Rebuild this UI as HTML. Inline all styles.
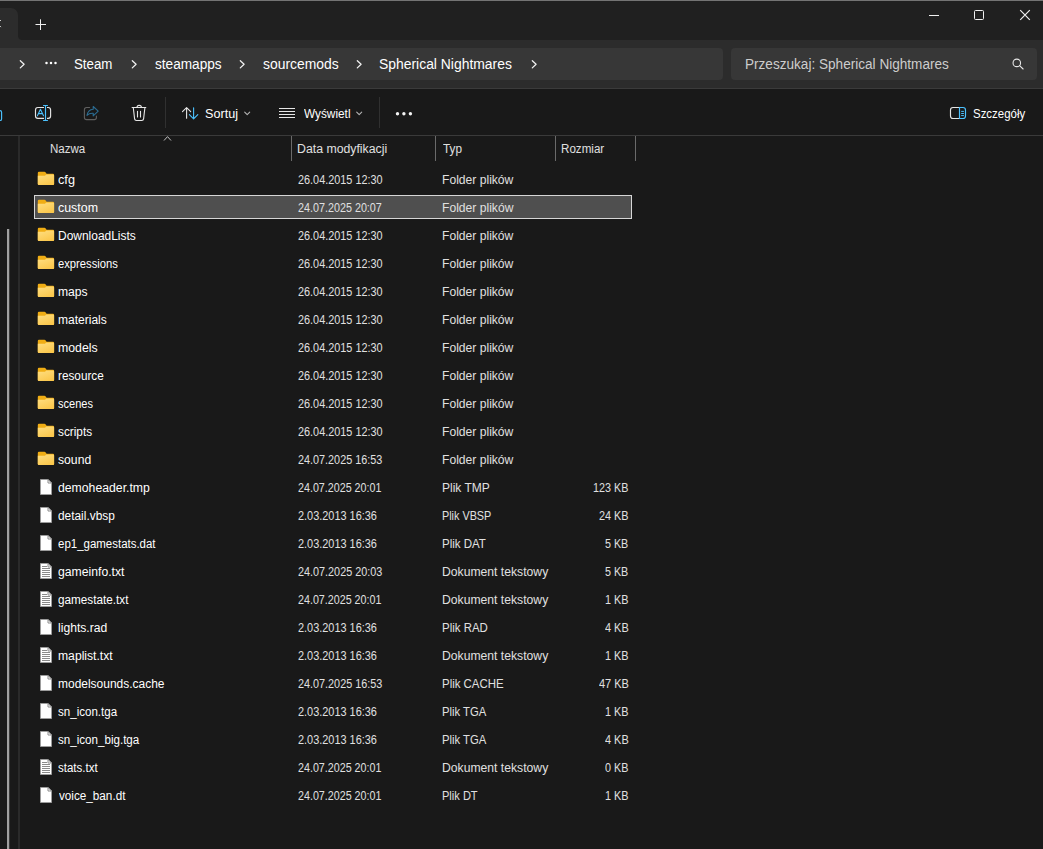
<!DOCTYPE html>
<html lang="pl">
<head>
<meta charset="utf-8">
<title>Spherical Nightmares</title>
<style>
*{margin:0;padding:0;box-sizing:border-box}
html,body{width:1043px;height:849px;overflow:hidden;background:#191919}
body{position:relative;font-family:"Liberation Sans",sans-serif;font-size:12px;color:#fff}
.abs,svg.i{position:absolute}
svg{display:block;overflow:visible}
#title{left:0;top:0;width:1043px;height:40px;background:#202020}
#topline{left:0;top:0;width:1043px;height:1px;background:#747474}
#tab{left:-12px;top:8px;width:30px;height:32px;background:#2c2c2c;border-radius:7px 7px 0 0}
#tabfoot{left:18px;top:36px;width:4px;height:4px;background:radial-gradient(circle at 100% 0,#202020 3.5px,#2c2c2c 4.5px)}
#addr{left:0;top:40px;width:1043px;height:48px;background:#2c2c2c}
#addrline{left:0;top:88px;width:1043px;height:1px;background:#3b3b3b}
#abox{left:-10px;top:48px;width:732.6px;height:32px;background:#373737;border-radius:4px}
#sbox{left:731px;top:48px;width:306px;height:32px;background:#373737;border-radius:4px}
#toolline{left:0;top:135px;width:1043px;height:1px;background:#3a3a3a}
.vsep{top:97px;width:1px;height:31px;background:#303030}
.t{position:absolute;white-space:nowrap;transform-origin:0 50%}
.t.n{height:28px;line-height:28px;color:#fff}
.t.o{height:28px;line-height:28px;color:#e0e0e0}
.t.h{height:26px;line-height:26px;color:#e0e0e0}
.t.c{height:32px;line-height:32px;font-size:14px;color:#fff}
.t.c.s{color:#cdcdcd}
.t.b{height:30px;line-height:30px;color:#fff}
.sep{top:136px;width:1px;height:25px;background:#6a6a6a}
.selbox{position:absolute;left:34px;width:598px;height:24px;background:#4f4f4f;border:1px solid #d6d6d6}
.ic{position:absolute}
.ic.d{left:38px;width:16px;height:14px}
.ic.f{left:40px;width:12px;height:16px}
</style>
</head>
<body>
<svg width="0" height="0" style="position:absolute">
<defs>
<linearGradient id="fg" x1="0" y1="0" x2="0.6" y2="1"><stop offset="0" stop-color="#ffdf82"/><stop offset="1" stop-color="#fbc84e"/></linearGradient>
<g id="fold">
<path d="M-0.2 1 Q-0.2 -0.2 1 -0.2 H6.5 Q7.1 -0.2 7.5 0.3 L8.6 1.8 H15 Q16.1 1.8 16.1 2.9 V11.9 Q16.1 13 15 13 H0.9 Q-0.2 13 -0.2 11.9 Z" fill="#f0ad14"/>
<path d="M-0.2 3.8 H6.3 Q6.9 3.8 7.3 3.4 L8.2 2.5 H15 Q16.1 2.5 16.1 3.6 V11.9 Q16.1 13 15 13 H0.9 Q-0.2 13 -0.2 11.9 Z" fill="url(#fg)"/>
</g>
<g id="file">
<path d="M0.5 0.5 H8 L11.5 4 V15.5 H0.5 Z" fill="#ffffff" stroke="#9c9c9c" stroke-width="1"/>
<path d="M8 0.5 V4 H11.5 Z" fill="#ffffff" stroke="#8c8c8c" stroke-width="1" stroke-linejoin="miter"/>
</g>
<g id="txt">
<path d="M0.5 0.5 H8 L11.5 4 V15.5 H0.5 Z" fill="#ffffff" stroke="#9c9c9c" stroke-width="1"/>
<path d="M8 0.5 V4 H11.5 Z" fill="#ffffff" stroke="#8c8c8c" stroke-width="1" stroke-linejoin="miter"/>
<path d="M2 3.5H7 M2 5.5H10 M2 7.5H10 M2 9.5H10 M2 11.5H10 M2 13.5H10" stroke="#8a8a8a" stroke-width="1"/>
</g>
<path id="chev" d="M0.3 0.3 L4.1 3.9 L0.3 7.5" fill="none" stroke="#f2f2f2" stroke-width="1.25" stroke-linecap="round" stroke-linejoin="round"/>
<path id="chevd" d="M0.4 0.5 L2.9 3 L5.4 0.5" fill="none" stroke="#b4b4b4" stroke-width="1.1" stroke-linecap="round" stroke-linejoin="round"/>
</defs>
</svg>

<div id="title" class="abs"></div>
<div id="topline" class="abs"></div>
<div id="tab" class="abs"></div>
<div id="tabfoot" class="abs"></div>
<div id="addr" class="abs"></div>
<div id="addrline" class="abs"></div>
<div id="abox" class="abs"></div>
<div id="sbox" class="abs"></div>
<div id="toolline" class="abs"></div>

<!-- title bar glyphs -->
<svg class="i" style="left:0;top:0" width="1043" height="40" viewBox="0 0 1043 40">
<g fill="none" stroke="#f0f0f0" stroke-width="1">
<path d="M-6.1 20.1 L0.9 27.1 M-6.1 27.1 L0.9 20.1" stroke="#e0e0e0"/>
<path d="M35.5 24.5 H46 M40.5 19.3 V30"/>
<path d="M929 15.5 H939"/>
<rect x="974.5" y="10.5" width="9" height="9" rx="1"/>
<path d="M1020.2 10.2 L1029.8 19.8 M1029.8 10.2 L1020.2 19.8" stroke-width="1.2"/>
</g>
</svg>

<!-- address bar glyphs -->
<svg class="i" style="left:0;top:40px" width="1043" height="48" viewBox="0 40 1043 48">
<use href="#chev" x="20" y="60.4"/>
<use href="#chev" x="132" y="60.4"/>
<use href="#chev" x="240" y="60.4"/>
<use href="#chev" x="357" y="60.4"/>
<use href="#chev" x="532" y="60.4"/>
<g fill="#ffffff"><circle cx="46.5" cy="63" r="1.25"/><circle cx="51" cy="63" r="1.25"/><circle cx="55.5" cy="63" r="1.25"/></g>
<g fill="none" stroke="#e8e8e8" stroke-width="1.1" stroke-linecap="round"><circle cx="1016.8" cy="62.9" r="3.75"/><path d="M1019.6 65.7 L1023.1 69"/></g>
</svg>

<!-- toolbar glyphs -->
<div class="vsep abs" style="left:165px"></div>
<div class="vsep abs" style="left:379px"></div>
<svg class="i" style="left:0;top:89px" width="1043" height="46" viewBox="0 89 1043 46">
<!-- partial paste icon -->
<path d="M-3 110.6 H0 Q1.6 110.6 1.6 112.2 V118.9 Q1.6 120.5 0 120.5 H-3" fill="none" stroke="#4cc2ff" stroke-width="1.15"/>
<!-- rename -->
<g fill="none" stroke-width="1.15" stroke-linecap="butt">
<path d="M44 107.5 H37.9 Q35.5 107.5 35.5 109.9 V116 Q35.5 118.4 37.9 118.4 H44" stroke="#e4e4e4"/>
<path d="M47 107.5 H48.2 Q50.6 107.5 50.6 109.9 V116 Q50.6 118.4 48.2 118.4 H47" stroke="#e4e4e4"/>
<path d="M45.5 105.5 V120.5 M43.1 105.5 H47.9 M43.1 120.5 H47.9" stroke="#4cc2ff"/>
<path d="M37.4 115.8 L40.45 109.2 L43.5 115.8 M38.6 113.6 H42.3" stroke="#4cc2ff" stroke-width="1.05" stroke-linejoin="round" stroke-linecap="round"/>
</g>
<!-- share (disabled) -->
<g fill="none" stroke-width="1.1" stroke-linecap="round" stroke-linejoin="round">
<path d="M89.6 107.5 H86.6 Q84.4 107.5 84.4 109.7 V117.4 Q84.4 119.6 86.6 119.6 H94.2 Q96.4 119.6 96.4 117.4 V116" stroke="#606060"/>
<path d="M93.2 106.5 L98.2 111.2 L93.2 115.8 V113.3 Q89.2 113 87 115.3 Q87.8 109.7 93.2 109.2 Z" stroke="#2b6c92"/>
</g>
<!-- trash -->
<g fill="none" stroke="#e6e6e6" stroke-width="1.1" stroke-linecap="round" stroke-linejoin="round">
<path d="M132.1 107.5 H145.8"/>
<path d="M137 107.4 Q137 105.4 139.2 105.4 Q141.4 105.4 141.4 107.4"/>
<path d="M133.3 107.8 L134.6 118.9 Q134.8 120.5 136.4 120.5 H141.8 Q143.4 120.5 143.6 118.9 L144.9 107.8"/>
<path d="M137.5 111.2 V117 M140.5 111.2 V117"/>
</g>
<!-- sort -->
<g fill="none" stroke-width="1.1" stroke-linecap="round" stroke-linejoin="round">
<path d="M186.6 118.3 V107.7 M182.5 111.7 L186.6 107.6 L190.7 111.7" stroke="#e6e6e6"/>
<path d="M193.6 107.7 V118.7 M189.4 114.6 L193.6 118.8 L197.8 114.6" stroke="#4cc2ff"/>
</g>
<use href="#chevd" x="244.3" y="111.6"/>
<!-- view -->
<path d="M279 108.5 H295 M279 111.5 H295 M279 114.5 H295 M279 117.5 H295" stroke="#e6e6e6" stroke-width="1"/>
<use href="#chevd" x="356.3" y="111.6"/>
<!-- more -->
<g fill="#f4f4f4"><circle cx="397.5" cy="113.7" r="1.7"/><circle cx="403.9" cy="113.7" r="1.7"/><circle cx="410.4" cy="113.7" r="1.7"/></g>
<!-- details pane -->
<g fill="none" stroke-width="1.15">
<path d="M959.5 107.5 H953 Q950.5 107.5 950.5 110 V116 Q950.5 118.5 953 118.5 H959.5" stroke="#e4e4e4"/>
<path d="M959.5 107.5 H963 Q965.5 107.5 965.5 110 V116 Q965.5 118.5 963 118.5 H959.5 Z" stroke="#4cc2ff"/>
<path d="M961.2 111.4 H963.9 M961.2 113.5 H963.9 M961.2 115.6 H963.9" stroke="#4cc2ff" stroke-width="1"/>
</g>
</svg>

<!-- list header -->
<div class="sep abs" style="left:291px"></div>
<div class="sep abs" style="left:435px"></div>
<div class="sep abs" style="left:555px"></div>
<div class="sep abs" style="left:635px"></div>
<svg class="i" style="left:162px;top:136px" width="12" height="6" viewBox="0 0 12 6"><path d="M2 4.5 L5.5 0.6 L9 4.5" fill="none" stroke="#c0c0c0" stroke-width="1"/></svg>

<!-- left pane -->
<div class="abs" style="left:18px;top:136px;width:2px;height:713px;background:#2a2a2a"></div>
<div class="abs" style="left:7px;top:229px;width:2px;height:620px;background:#a0a0a0;box-shadow:1px 0 0 rgba(160,160,160,.25)"></div>

<svg class="ic d" style="top:172px" viewBox="0 0 16 14"><use href="#fold"/></svg>
<div class="selbox" style="top:195px"></div>
<svg class="ic d" style="top:200px" viewBox="0 0 16 14"><use href="#fold"/></svg>
<svg class="ic d" style="top:228px" viewBox="0 0 16 14"><use href="#fold"/></svg>
<svg class="ic d" style="top:256px" viewBox="0 0 16 14"><use href="#fold"/></svg>
<svg class="ic d" style="top:284px" viewBox="0 0 16 14"><use href="#fold"/></svg>
<svg class="ic d" style="top:312px" viewBox="0 0 16 14"><use href="#fold"/></svg>
<svg class="ic d" style="top:340px" viewBox="0 0 16 14"><use href="#fold"/></svg>
<svg class="ic d" style="top:368px" viewBox="0 0 16 14"><use href="#fold"/></svg>
<svg class="ic d" style="top:396px" viewBox="0 0 16 14"><use href="#fold"/></svg>
<svg class="ic d" style="top:424px" viewBox="0 0 16 14"><use href="#fold"/></svg>
<svg class="ic d" style="top:452px" viewBox="0 0 16 14"><use href="#fold"/></svg>
<svg class="ic f" style="top:479px" viewBox="0 0 12 16"><use href="#file"/></svg>
<svg class="ic f" style="top:507px" viewBox="0 0 12 16"><use href="#file"/></svg>
<svg class="ic f" style="top:535px" viewBox="0 0 12 16"><use href="#file"/></svg>
<svg class="ic f" style="top:563px" viewBox="0 0 12 16"><use href="#txt"/></svg>
<svg class="ic f" style="top:591px" viewBox="0 0 12 16"><use href="#txt"/></svg>
<svg class="ic f" style="top:619px" viewBox="0 0 12 16"><use href="#file"/></svg>
<svg class="ic f" style="top:647px" viewBox="0 0 12 16"><use href="#txt"/></svg>
<svg class="ic f" style="top:675px" viewBox="0 0 12 16"><use href="#file"/></svg>
<svg class="ic f" style="top:703px" viewBox="0 0 12 16"><use href="#file"/></svg>
<svg class="ic f" style="top:731px" viewBox="0 0 12 16"><use href="#file"/></svg>
<svg class="ic f" style="top:759px" viewBox="0 0 12 16"><use href="#txt"/></svg>
<svg class="ic f" style="top:787px" viewBox="0 0 12 16"><use href="#file"/></svg>
<div id="n0" class="t n" style="left:58.00px;top:166px;transform:scaleX(1.0585)">cfg</div>
<div id="d0" class="t o" style="left:298.00px;top:166px;transform:scaleX(0.9057)">26.04.2015 12:30</div>
<div id="y0" class="t o" style="left:442.00px;top:166px;transform:scaleX(1.0094)">Folder plików</div>
<div id="n1" class="t n" style="left:58.00px;top:194px;transform:scaleX(1.0342)">custom</div>
<div id="d1" class="t o" style="left:298.00px;top:194px;transform:scaleX(0.8974)">24.07.2025 20:07</div>
<div id="y1" class="t o" style="left:442.00px;top:194px;transform:scaleX(1.0097)">Folder plików</div>
<div id="n2" class="t n" style="left:58.00px;top:222px;transform:scaleX(0.9964)">DownloadLists</div>
<div id="d2" class="t o" style="left:298.00px;top:222px;transform:scaleX(0.9057)">26.04.2015 12:30</div>
<div id="y2" class="t o" style="left:442.00px;top:222px;transform:scaleX(1.0094)">Folder plików</div>
<div id="n3" class="t n" style="left:58.00px;top:250px;transform:scaleX(0.9367)">expressions</div>
<div id="d3" class="t o" style="left:298.00px;top:250px;transform:scaleX(0.9057)">26.04.2015 12:30</div>
<div id="y3" class="t o" style="left:442.00px;top:250px;transform:scaleX(1.0094)">Folder plików</div>
<div id="n4" class="t n" style="left:58.00px;top:278px;transform:scaleX(1.0114)">maps</div>
<div id="d4" class="t o" style="left:298.00px;top:278px;transform:scaleX(0.9057)">26.04.2015 12:30</div>
<div id="y4" class="t o" style="left:442.00px;top:278px;transform:scaleX(1.0094)">Folder plików</div>
<div id="n5" class="t n" style="left:58.00px;top:306px;transform:scaleX(1.0021)">materials</div>
<div id="d5" class="t o" style="left:298.00px;top:306px;transform:scaleX(0.9057)">26.04.2015 12:30</div>
<div id="y5" class="t o" style="left:442.00px;top:306px;transform:scaleX(1.0094)">Folder plików</div>
<div id="n6" class="t n" style="left:58.00px;top:334px;transform:scaleX(1.0253)">models</div>
<div id="d6" class="t o" style="left:298.00px;top:334px;transform:scaleX(0.9057)">26.04.2015 12:30</div>
<div id="y6" class="t o" style="left:442.00px;top:334px;transform:scaleX(1.0094)">Folder plików</div>
<div id="n7" class="t n" style="left:58.00px;top:362px;transform:scaleX(0.9804)">resource</div>
<div id="d7" class="t o" style="left:298.00px;top:362px;transform:scaleX(0.9057)">26.04.2015 12:30</div>
<div id="y7" class="t o" style="left:442.00px;top:362px;transform:scaleX(1.0094)">Folder plików</div>
<div id="n8" class="t n" style="left:58.00px;top:390px;transform:scaleX(0.9189)">scenes</div>
<div id="d8" class="t o" style="left:298.00px;top:390px;transform:scaleX(0.9057)">26.04.2015 12:30</div>
<div id="y8" class="t o" style="left:442.00px;top:390px;transform:scaleX(1.0094)">Folder plików</div>
<div id="n9" class="t n" style="left:58.00px;top:418px;transform:scaleX(0.9839)">scripts</div>
<div id="d9" class="t o" style="left:298.00px;top:418px;transform:scaleX(0.9057)">26.04.2015 12:30</div>
<div id="y9" class="t o" style="left:442.00px;top:418px;transform:scaleX(1.0094)">Folder plików</div>
<div id="n10" class="t n" style="left:58.00px;top:446px;transform:scaleX(1.0144)">sound</div>
<div id="d10" class="t o" style="left:298.00px;top:446px;transform:scaleX(0.9019)">24.07.2025 16:53</div>
<div id="y10" class="t o" style="left:442.00px;top:446px;transform:scaleX(1.0094)">Folder plików</div>
<div id="n11" class="t n" style="left:58.00px;top:474px;transform:scaleX(1.0199)">demoheader.tmp</div>
<div id="d11" class="t o" style="left:298.00px;top:474px;transform:scaleX(0.8929)">24.07.2025 20:01</div>
<div id="y11" class="t o" style="left:442.00px;top:474px;transform:scaleX(1.0014)">Plik TMP</div>
<div id="s11" class="t o" style="left:593.00px;top:474px;transform:scaleX(0.8977)">123 KB</div>
<div id="n12" class="t n" style="left:58.00px;top:502px;transform:scaleX(0.9897)">detail.vbsp</div>
<div id="d12" class="t o" style="left:298.00px;top:502px;transform:scaleX(0.9097)">2.03.2013 16:36</div>
<div id="y12" class="t o" style="left:442.00px;top:502px;transform:scaleX(0.9011)">Plik VBSP</div>
<div id="s12" class="t o" style="left:599.00px;top:502px;transform:scaleX(0.9044)">24 KB</div>
<div id="n13" class="t n" style="left:58.00px;top:530px;transform:scaleX(0.9558)">ep1_gamestats.dat</div>
<div id="d13" class="t o" style="left:298.00px;top:530px;transform:scaleX(0.9097)">2.03.2013 16:36</div>
<div id="y13" class="t o" style="left:442.00px;top:530px;transform:scaleX(0.9585)">Plik DAT</div>
<div id="s13" class="t o" style="left:605.00px;top:530px;transform:scaleX(0.8937)">5 KB</div>
<div id="n14" class="t n" style="left:58.00px;top:558px;transform:scaleX(1.0164)">gameinfo.txt</div>
<div id="d14" class="t o" style="left:298.00px;top:558px;transform:scaleX(0.9019)">24.07.2025 20:03</div>
<div id="y14" class="t o" style="left:442.00px;top:558px;transform:scaleX(1.0145)">Dokument tekstowy</div>
<div id="s14" class="t o" style="left:605.00px;top:558px;transform:scaleX(0.8937)">5 KB</div>
<div id="n15" class="t n" style="left:58.00px;top:586px;transform:scaleX(0.9779)">gamestate.txt</div>
<div id="d15" class="t o" style="left:298.00px;top:586px;transform:scaleX(0.8929)">24.07.2025 20:01</div>
<div id="y15" class="t o" style="left:442.00px;top:586px;transform:scaleX(1.0145)">Dokument tekstowy</div>
<div id="s15" class="t o" style="left:605.00px;top:586px;transform:scaleX(0.9041)">1 KB</div>
<div id="n16" class="t n" style="left:58.00px;top:614px;transform:scaleX(1.0120)">lights.rad</div>
<div id="d16" class="t o" style="left:298.00px;top:614px;transform:scaleX(0.9097)">2.03.2013 16:36</div>
<div id="y16" class="t o" style="left:442.00px;top:614px;transform:scaleX(0.9551)">Plik RAD</div>
<div id="s16" class="t o" style="left:605.00px;top:614px;transform:scaleX(0.9108)">4 KB</div>
<div id="n17" class="t n" style="left:58.00px;top:642px;transform:scaleX(1.0125)">maplist.txt</div>
<div id="d17" class="t o" style="left:298.00px;top:642px;transform:scaleX(0.9097)">2.03.2013 16:36</div>
<div id="y17" class="t o" style="left:442.00px;top:642px;transform:scaleX(1.0145)">Dokument tekstowy</div>
<div id="s17" class="t o" style="left:605.00px;top:642px;transform:scaleX(0.9041)">1 KB</div>
<div id="n18" class="t n" style="left:58.00px;top:670px;transform:scaleX(0.9975)">modelsounds.cache</div>
<div id="d18" class="t o" style="left:298.00px;top:670px;transform:scaleX(0.9019)">24.07.2025 16:53</div>
<div id="y18" class="t o" style="left:442.00px;top:670px;transform:scaleX(0.9528)">Plik CACHE</div>
<div id="s18" class="t o" style="left:599.00px;top:670px;transform:scaleX(0.9147)">47 KB</div>
<div id="n19" class="t n" style="left:58.00px;top:698px;transform:scaleX(0.9634)">sn_icon.tga</div>
<div id="d19" class="t o" style="left:298.00px;top:698px;transform:scaleX(0.9097)">2.03.2013 16:36</div>
<div id="y19" class="t o" style="left:442.00px;top:698px;transform:scaleX(0.9391)">Plik TGA</div>
<div id="s19" class="t o" style="left:605.00px;top:698px;transform:scaleX(0.9041)">1 KB</div>
<div id="n20" class="t n" style="left:58.00px;top:726px;transform:scaleX(0.9665)">sn_icon_big.tga</div>
<div id="d20" class="t o" style="left:298.00px;top:726px;transform:scaleX(0.9097)">2.03.2013 16:36</div>
<div id="y20" class="t o" style="left:442.00px;top:726px;transform:scaleX(0.9391)">Plik TGA</div>
<div id="s20" class="t o" style="left:605.00px;top:726px;transform:scaleX(0.9108)">4 KB</div>
<div id="n21" class="t n" style="left:58.00px;top:754px;transform:scaleX(0.9596)">stats.txt</div>
<div id="d21" class="t o" style="left:298.00px;top:754px;transform:scaleX(0.8929)">24.07.2025 20:01</div>
<div id="y21" class="t o" style="left:442.00px;top:754px;transform:scaleX(1.0145)">Dokument tekstowy</div>
<div id="s21" class="t o" style="left:605.00px;top:754px;transform:scaleX(0.8983)">0 KB</div>
<div id="n22" class="t n" style="left:59.00px;top:782px;transform:scaleX(0.9757)">voice_ban.dt</div>
<div id="d22" class="t o" style="left:298.00px;top:782px;transform:scaleX(0.8929)">24.07.2025 20:01</div>
<div id="y22" class="t o" style="left:442.00px;top:782px;transform:scaleX(0.9211)">Plik DT</div>
<div id="s22" class="t o" style="left:605.00px;top:782px;transform:scaleX(0.9041)">1 KB</div>
<div id="h0" class="t h" style="left:50.00px;top:136px;transform:scaleX(0.9617)">Nazwa</div>
<div id="h1" class="t h" style="left:297.00px;top:136px;transform:scaleX(1.0246)">Data modyfikacji</div>
<div id="h2" class="t h" style="left:443.00px;top:136px;transform:scaleX(0.9794)">Typ</div>
<div id="h3" class="t h" style="left:561.00px;top:136px;transform:scaleX(0.9671)">Rozmiar</div>
<div id="c0" class="t c" style="left:74.00px;top:48px;transform:scaleX(0.9501)">Steam</div>
<div id="c1" class="t c" style="left:155.00px;top:48px;transform:scaleX(0.9733)">steamapps</div>
<div id="c2" class="t c" style="left:263.00px;top:48px;transform:scaleX(0.9921)">sourcemods</div>
<div id="c3" class="t c" style="left:379.00px;top:48px;transform:scaleX(0.9928)">Spherical Nightmares</div>
<div id="c4" class="t c s" style="left:745.00px;top:48px;transform:scaleX(0.9702)">Przeszukaj: Spherical Nightmares</div>
<div id="b0" class="t b" style="left:205.00px;top:99px;transform:scaleX(1.0513)">Sortuj</div>
<div id="b1" class="t b" style="left:304.00px;top:99px;transform:scaleX(0.9848)">Wyświetl</div>
<div id="b2" class="t b" style="left:973.00px;top:99px;transform:scaleX(0.9545)">Szczegóły</div>
</body>
</html>
